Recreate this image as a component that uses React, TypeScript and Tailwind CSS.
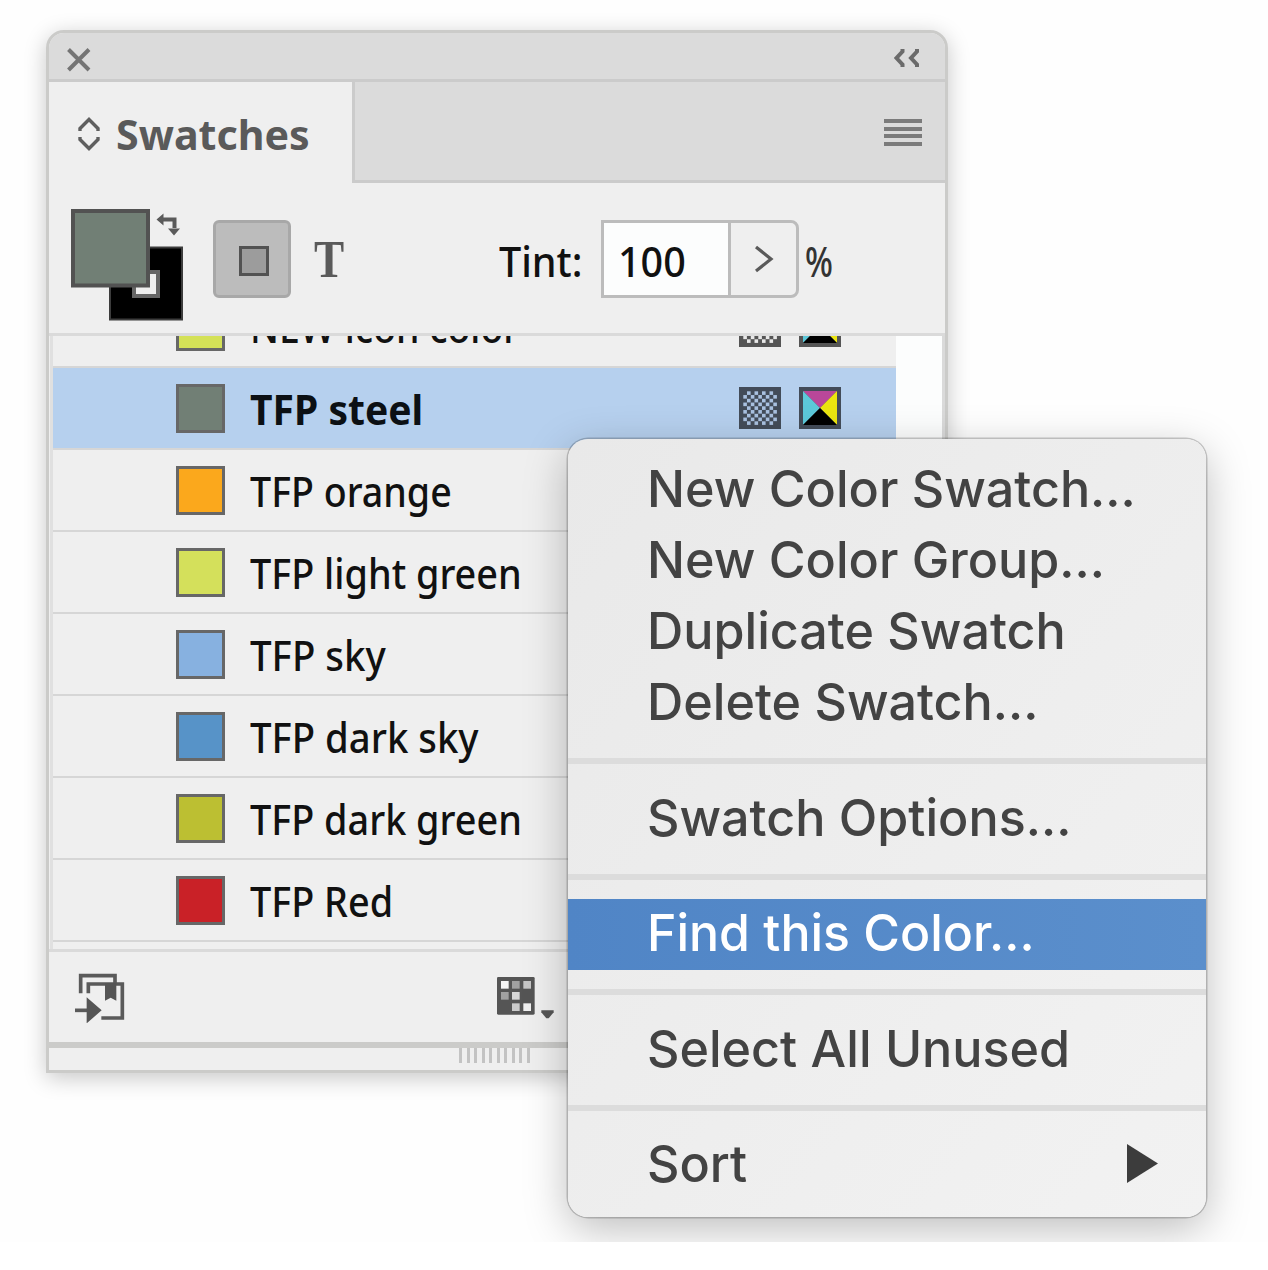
import React from 'react';

type Swatch = {
  name: string;
  color: string;
  scale: string;
  selected?: boolean;
};

const swatches: Swatch[] = [
  { name: 'NEW icon color', color: 'bg-[#d4e157]', scale: 'scale-x-[0.89]' },
  { name: 'TFP steel', color: 'bg-[#717f75]', scale: 'scale-x-[0.93]', selected: true },
  { name: 'TFP orange', color: 'bg-[#fba81c]', scale: 'scale-x-[0.895]' },
  { name: 'TFP light green', color: 'bg-[#d4e05b]', scale: 'scale-x-[0.9]' },
  { name: 'TFP sky', color: 'bg-[#87b1e0]', scale: 'scale-x-[0.915]' },
  { name: 'TFP dark sky', color: 'bg-[#5793c8]', scale: 'scale-x-[0.912]' },
  { name: 'TFP dark green', color: 'bg-[#bcbf32]', scale: 'scale-x-[0.9]' },
  { name: 'TFP Red', color: 'bg-[#c92127]', scale: 'scale-x-[0.9]' },
];

const menuGroups: { label: string; active?: boolean; submenu?: boolean }[][] = [
  [
    { label: 'New Color Swatch...' },
    { label: 'New Color Group...' },
    { label: 'Duplicate Swatch' },
    { label: 'Delete Swatch...' },
  ],
  [{ label: 'Swatch Options...' }],
  [{ label: 'Find this Color...', active: true }],
  [{ label: 'Select All Unused' }],
  [{ label: 'Sort', submenu: true }],
];

function TitleBar() {
  return (
    <div className="flex h-[49px] shrink-0 items-start justify-between border-b-[3px] border-[#cbcbcb] bg-[#dbdbdb] pr-[26px] pl-[17px]">
      <svg className="mt-[14px] h-[26px] w-[26px]" viewBox="0 0 26 26" fill="none" stroke="#747474" strokeWidth="4">
        <path d="M2.5 2.5 23 23M23 2.5 2.5 23" />
      </svg>
      <svg className="mt-[14px] h-[22px] w-[26px]" viewBox="0 0 26 22" fill="none" stroke="#6b6b6b" strokeWidth="4">
        <path d="M9.500 2V4.500L3.500 11 9.500 17.500V20M24 2V4.500L18 11 24 17.500V20" />
      </svg>
    </div>
  );
}

function TabBar() {
  return (
    <div className="flex h-[101px] shrink-0">
      <div className="flex w-[303px] items-center pt-[3px] pl-[29px]">
        <svg className="h-[36px] w-[22px]" viewBox="0 0 22 36" fill="none" stroke="#5f5f5f" strokeWidth="3.4">
          <path d="M2 15V12.500L11 3.500 20 12.500V15M2 21V23.500L11 32.500 20 23.500V21" />
        </svg>
        <span className="ml-[16px] inline-block origin-left scale-x-[0.98] text-[42px] leading-none font-bold whitespace-nowrap text-[#5a5a5a]">
          Swatches
        </span>
      </div>
      <div className="flex flex-1 items-center justify-end border-b-[3px] border-l-[3px] border-[#cbcbcb] bg-[#dbdbdb] pt-[3px] pr-[23px]">
        <div className="flex w-[38px] flex-col gap-[3.500px]">
          <div className="h-1 bg-[#7b7b7b]" />
          <div className="h-1 bg-[#7b7b7b]" />
          <div className="h-1 bg-[#7b7b7b]" />
          <div className="h-1 bg-[#7b7b7b]" />
        </div>
      </div>
    </div>
  );
}

function Controls() {
  return (
    <div className="flex h-[150px] shrink-0 items-start">
      <svg className="mt-[26px] ml-[22px] h-[112px] w-[112px]" viewBox="0 0 112 112">
        <rect x="39" y="38.500" width="72" height="72" fill="#000" stroke="#3c3c3c" strokeWidth="2" />
        <rect x="63" y="63" width="24" height="24" fill="#efefef" stroke="#666" strokeWidth="4" />
        <rect x="2" y="2" width="75" height="74.500" fill="#717f75" stroke="#525252" strokeWidth="4" />
        <path d="M92 10.500H103.500V19" fill="none" stroke="#5a5a5a" strokeWidth="4" />
        <path d="M85.500 10.500 92.500 4.500V16.500ZM97 19.500H109L103 26.500Z" fill="#5a5a5a" />
      </svg>
      <div className="mt-[37px] ml-[30px] flex h-[78px] w-[78px] items-center justify-center rounded-md border-[3px] border-[#a8a8a8] bg-[#bcbcbc]">
        <div className="mt-1 ml-1 h-[30px] w-[30px] border-[3.500px] border-[#525252] bg-[#9c9c9c]" />
      </div>
      <span className="mt-[51px] ml-[23px] inline-block w-[36px] origin-left scale-x-[0.87] font-['Liberation_Serif',serif] text-[52px] leading-[52px] font-bold text-[#5a5a5a]">
        T
      </span>
      <span className="mt-[50px] ml-[149px] inline-block w-[102px] origin-left scale-x-[0.94] text-[42px] leading-[56px] font-medium text-[#111]">
        Tint:
      </span>
      <div className="mt-[37px] flex h-[78px] w-[198px] overflow-hidden rounded-r-lg border-[3px] border-[#bcbcbc]">
        <div className="flex w-[127px] items-center border-r-[3px] border-[#bcbcbc] bg-[#fcfdfd] pl-[14px]">
          <span className="mt-1 inline-block origin-left scale-x-[0.94] text-[42px] leading-none font-medium text-[#111]">
            100
          </span>
        </div>
        <div className="flex flex-1 items-center justify-center">
          <svg className="h-7 w-5" viewBox="0 0 20 28" fill="none" stroke="#5a5a5a" strokeWidth="3.200">
            <path d="M2 2 17 14 2 26" />
          </svg>
        </div>
      </div>
      <span className="mt-[50px] ml-[6px] inline-block w-[30px] origin-left scale-x-[0.78] text-[42px] leading-[56px] font-medium text-[#333]">
        %
      </span>
    </div>
  );
}

function TintIcon({ selected }: { selected?: boolean }) {
  const rows = [0, 1, 2, 3, 4, 5, 6, 7, 8];
  return (
    <svg className="h-[42px] w-[42px]" viewBox="0 0 42 42">
      <rect width="42" height="42" fill={selected ? '#434c59' : '#555'} />
      {rows.map((r) =>
        (r % 2 ? [0, 1, 2, 3, 4] : [0, 1, 2, 3]).map((c) => (
          <rect
            key={`${r}-${c}`}
            x={(r % 2 ? 4.3 : 8) + c * 7.5}
            y={4.3 + r * 3.75}
            width="3.600"
            height="3.600"
            fill={selected ? '#a9c1e0' : '#e8e8e8'}
          />
        )),
      )}
    </svg>
  );
}

function CmykIcon({ selected }: { selected?: boolean }) {
  return (
    <svg className="h-[42px] w-[42px]" viewBox="0 0 42 42">
      <rect width="42" height="42" fill={selected ? '#434c59' : '#555'} />
      <path d="M4 4H38L21 21Z" fill="#b94799" />
      <path d="M4 4V38L21 21Z" fill="#5cc8d9" />
      <path d="M38 4V38L21 21Z" fill="#ebe510" />
      <path d="M4 38H38L21 21Z" fill="#000" />
    </svg>
  );
}

function SwatchRow({ swatch }: { swatch: Swatch }) {
  return (
    <div
      className={`flex h-[82px] shrink-0 items-center border-b-[2px] border-[#d6d6d6] pl-[123px] ${
        swatch.selected ? 'bg-[#b6d0ee]' : ''
      }`}
    >
      <div className={`h-[49px] w-[49px] border-[3px] border-[#676767] ${swatch.color}`} />
      <div className="ml-[25px] w-[489px] pt-[2px]">
        <span
          className={`inline-block origin-left text-[42px] leading-[56px] whitespace-nowrap ${swatch.scale} ${
            swatch.selected ? 'font-bold text-[#0c1014]' : 'font-medium text-[#111]'
          }`}
        >
          {swatch.name}
        </span>
      </div>
      <div className="flex gap-[18px]">
        <TintIcon selected={swatch.selected} />
        <CmykIcon selected={swatch.selected} />
      </div>
    </div>
  );
}

function SwatchList() {
  return (
    <div className="flex h-[619px] shrink-0 overflow-hidden border-y-[3px] border-[#dadada]">
      <div className="ml-[1px] flex w-[847px] flex-col justify-start overflow-hidden border-l-[3px] border-[#e0e0e0]">
        <div className="-mt-[50px] flex flex-col">
          {swatches.map((s) => (
            <SwatchRow key={s.name} swatch={s} />
          ))}
        </div>
      </div>
      <div className="w-[46px] bg-[#fcfdfd]" />
      <div className="w-[3px] bg-[#dadada]" />
    </div>
  );
}

function Footer() {
  return (
    <div className="flex h-[90px] shrink-0 items-start">
      <svg className="mt-[21px] ml-[26px] h-[50px] w-[50px]" viewBox="105 155 150 150">
        <g fill="none" stroke="#5a5a5a" strokeWidth="11">
          <path d="M122 216V163H225V186" />
          <path d="M145 216V188H247V290H184" />
          <path d="M105 267H145" />
        </g>
        <path d="M140 228V306L185 267ZM195 185H229V238L212 229 195 238Z" fill="#555" />
      </svg>
      <svg className="mt-[25px] ml-[372px] h-[42px] w-[58px]" viewBox="170 141 174 126">
        <rect x="170" y="141" width="113" height="113" rx="4" fill="#555" />
        <rect x="182" y="153" width="23" height="23" fill="#f4f4f4" />
        <rect x="215" y="153" width="23" height="23" fill="#a2a2a2" />
        <rect x="249" y="153" width="23" height="23" fill="#c6c6c6" />
        <rect x="182" y="186" width="23" height="23" fill="#a2a2a2" />
        <rect x="215" y="186" width="23" height="23" fill="#d6d6d6" />
        <rect x="215" y="220" width="23" height="23" fill="#cacaca" />
        <rect x="249" y="220" width="23" height="23" fill="#f0f0f0" />
        <path d="M303 241H340V247L325 265H318L303 247Z" fill="#555" />
      </svg>
    </div>
  );
}

function Grip() {
  return (
    <div className="flex flex-1 items-start border-t-[6px] border-[#cbcbc9] pl-[410px]">
      <div className="flex gap-[4.500px]">
        {Array.from({ length: 10 }, (_, i) => (
          <div key={i} className="h-[15px] w-[3px] bg-[#c3c3c3]" />
        ))}
      </div>
    </div>
  );
}

function ContextMenu() {
  return (
    <div className="absolute top-[439px] left-[568px] w-[638px] rounded-[20px] bg-linear-to-br from-[#e9e9e9] to-[#f2f2f2] py-[16px] font-['Inter',sans-serif] shadow-[0_0_0_1.500px_rgba(0,0,0,0.2),0_12px_44px_rgba(0,0,0,0.26)]">
      {menuGroups.map((group, g) => (
        <React.Fragment key={g}>
          {g > 0 && (
            <div className="flex h-[44.500px] items-center">
              <div className="h-[6px] w-full bg-[#dcdcdc]" />
            </div>
          )}
          {group.map((item) => (
            <div
              key={item.label}
              className={`flex h-[71px] items-center justify-between pr-[48px] pb-1 pl-[78.500px] text-[51px] leading-none whitespace-nowrap ${
                item.active
                  ? 'bg-linear-to-r from-[#5085c6] to-[#5b8fcc] font-medium text-white'
                  : 'font-[450] text-[#434343]'
              }`}
            >
              <span className={`inline-block origin-left ${item.active ? 'scale-x-[0.98]' : 'scale-x-[0.985]'}`}>
                {item.label}
              </span>
              {item.submenu && (
                <svg className="h-[39px] w-[31px]" viewBox="0 0 31 39">
                  <path d="M0 0 31 19.500 0 39Z" fill="#3c3c3c" />
                </svg>
              )}
            </div>
          ))}
        </React.Fragment>
      ))}
    </div>
  );
}

export default function App() {
  return (
    <div className="h-[1270px] w-[1268px] bg-white font-['Noto_Sans',sans-serif]">
      <div className="relative h-[1242px] w-[1268px] overflow-hidden bg-[#fefefe] pt-[30px] pl-[46px]">
        <div className="flex h-[1043px] w-[902px] flex-col overflow-hidden rounded-t-[18px] border-[3px] border-[#cbcbc9] bg-[#efefef] shadow-[0_5px_22px_rgba(0,0,0,0.22)]">
          <TitleBar />
          <TabBar />
          <Controls />
          <SwatchList />
          <Footer />
          <Grip />
        </div>
        <ContextMenu />
      </div>
    </div>
  );
}
